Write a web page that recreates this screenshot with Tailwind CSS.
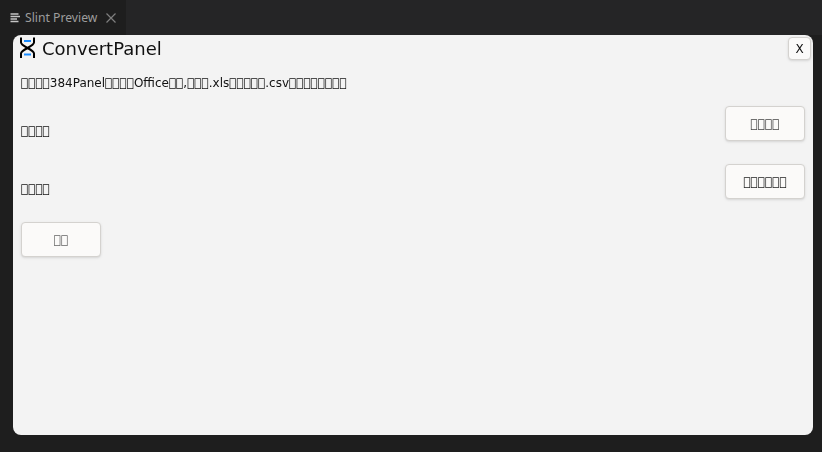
<!DOCTYPE html>
<html lang="en">

<head>
    <meta charset="UTF-8" />
    <title>Slint Preview</title>
    <script src="https://cdn.jsdelivr.net/npm/@tailwindcss/browser@4"></script>
</head>

<body class="w-[822px] h-[452px] overflow-hidden bg-[#1e1e1e] font-['DejaVu_Sans',sans-serif]">
    <!-- tab bar -->
    <div class="h-[35px] bg-[#252526] flex">
        <div class="w-[126px] bg-[#1e1e1e] flex items-center pl-[10px] text-[#9d9d9d] font-['Noto_Sans',sans-serif] text-[12.200px]">
            <svg width="12" height="12" viewBox="0 0 12 12" class="mr-[3px] shrink-0">
                <path d="M0.500 2h8M0.500 4.500h9.500M0.500 7h6.500M0.500 9.500h8" stroke="#c5c5c5" stroke-width="1.400" fill="none" />
            </svg>
            <span class="pt-[2px]">Slint Preview</span>
            <svg width="12" height="12" viewBox="0 0 12 12" class="ml-[8px] shrink-0">
                <path d="M1.500 1.500l9 9M10.500 1.500l-9 9" stroke="#7f7f7f" stroke-width="1.200" fill="none" />
            </svg>
        </div>
    </div>

    <!-- preview window -->
    <div class="relative will-change-transform ml-[13px] w-[800px] h-[400px] bg-[#f3f3f3] rounded-[8px] px-2 text-[12px] text-[#111]">
        <div class="h-[26px] flex items-center justify-between">
            <div class="flex items-center -ml-[2px] gap-[3px]">
                <svg width="20" height="24" viewBox="0 0 20 24" class="shrink-0">
                    <path d="M2 1.500v5c0 4 13 7 13 11v4.500M15 1.500v5c0 4-13 7-13 11v4.500" stroke="#000" stroke-width="2" fill="none" />
                    <path d="M5 5h7M5 18.500h7" stroke="#1a8cff" stroke-width="2" fill="none" />
                </svg>
                <span class="text-[18px] leading-[26px] pt-[1px]">ConvertPanel</span>
            </div>
            <button class="self-start w-[23px] h-[23px] mt-[2px] -mr-[6px] bg-[#fbfaf9] border border-[#d4d2cf] rounded-[4px] text-[12px] shadow-sm">X</button>
        </div>

        <p class="mt-[13px] leading-[18px]">&#xE000;&#xE000;&#xE000;&#xE000;384Panel&#xE000;&#xE000;&#xE000;&#xE000;Office&#xE000;&#xE000;,&#xE000;&#xE000;&#xE000;.xls&#xE000;&#xE000;&#xE000;&#xE000;&#xE000;.csv&#xE000;&#xE000;&#xE000;&#xE000;&#xE000;&#xE000;&#xE000;&#xE000;</p>

        <div class="flex justify-between items-start mt-[14px]">
            <span class="mt-[16px] leading-[18px]">&#xE000;&#xE000;&#xE000;&#xE000;</span>
            <button class="w-[80px] h-[35px] bg-[#fbfaf9] border border-[#d4d2cf] rounded-[4px] text-[#444] shadow-sm">&#xE000;&#xE000;&#xE000;&#xE000;</button>
        </div>
        <div class="flex justify-between items-start mt-[23px]">
            <span class="mt-[16px] leading-[18px]">&#xE000;&#xE000;&#xE000;&#xE000;</span>
            <button class="w-[80px] h-[35px] bg-[#fbfaf9] border border-[#d4d2cf] rounded-[4px] text-[#222] shadow-sm">&#xE000;&#xE000;&#xE000;&#xE000;&#xE000;&#xE000;</button>
        </div>
        <button class="block mt-[23px] w-[80px] h-[35px] bg-[#fbfaf9] border border-[#d4d2cf] rounded-[4px] text-[#666] shadow-sm">&#xE000;&#xE000;</button>
    </div>
</body>

</html>
